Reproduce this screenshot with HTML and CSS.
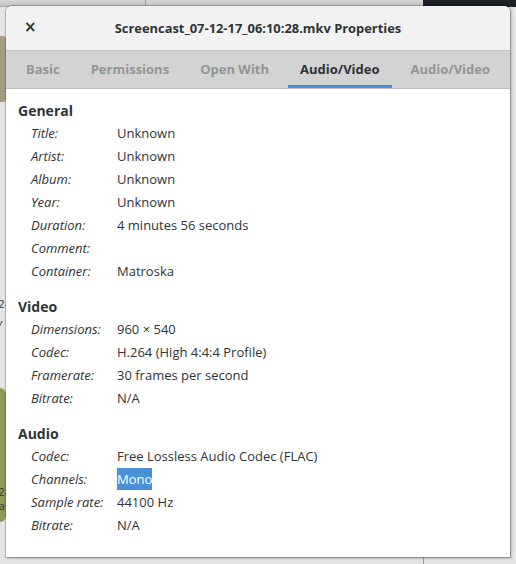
FILE: index.html
```html
<!DOCTYPE html>
<html>
<head>
<meta charset="utf-8">
<link rel="stylesheet" href="styles.css">
</head>
<body>
<div class="desktop">
  <div class="bg-top"></div>
  <div class="bg-top-line"></div>
  <div class="bg-dark"></div>
  <div class="bg-brown"></div>
  <div class="bg-green"></div>
  <div class="bg-text t1">02-</div>
  <div class="bg-text t2">v</div>
  <div class="bg-text t3">02-</div>
  <div class="bg-text t4">la</div>
  <div class="bg-vline"></div>

  <div class="window">
    <div class="header">
      <span class="close">×</span>
      <span class="title">Screencast_07-12-17_06:10:28.mkv Properties</span>
    </div>
    <div class="tabs">
      <div class="tab">Basic</div>
      <div class="tab">Permissions</div>
      <div class="tab">Open With</div>
      <div class="tab active">Audio/Video</div>
      <div class="tab">Audio/Video</div>
    </div>
    <div class="content">
      <section class="group">
        <h2>General</h2>
        <div class="rows">
          <span class="label">Title:</span><span class="value">Unknown</span>
          <span class="label">Artist:</span><span class="value">Unknown</span>
          <span class="label">Album:</span><span class="value">Unknown</span>
          <span class="label">Year:</span><span class="value">Unknown</span>
          <span class="label">Duration:</span><span class="value">4 minutes 56 seconds</span>
          <span class="label">Comment:</span><span class="value"></span>
          <span class="label">Container:</span><span class="value">Matroska</span>
        </div>
      </section>
      <section class="group">
        <h2>Video</h2>
        <div class="rows">
          <span class="label">Dimensions:</span><span class="value">960 × 540</span>
          <span class="label">Codec:</span><span class="value">H.264 (High 4:4:4 Profile)</span>
          <span class="label">Framerate:</span><span class="value">30 frames per second</span>
          <span class="label">Bitrate:</span><span class="value">N/A</span>
        </div>
      </section>
      <section class="group">
        <h2>Audio</h2>
        <div class="rows">
          <span class="label">Codec:</span><span class="value">Free Lossless Audio Codec (FLAC)</span>
          <span class="label">Channels:</span><span class="value"><span class="selected">Mono</span></span>
          <span class="label">Sample rate:</span><span class="value">44100 Hz</span>
          <span class="label">Bitrate:</span><span class="value">N/A</span>
        </div>
      </section>
    </div>
  </div>
</div>
</body>
</html>
```

FILE: styles.css
```css
html, body {
  margin: 0;
  padding: 0;
}
body {
  font-family: "Open Sans", "Noto Sans", sans-serif;
  font-size: 13px;
  color: #2e3436;
}
.desktop {
  position: relative;
  width: 516px;
  height: 564px;
  overflow: hidden;
  background: #e4e4e4;
}
.bg-top {
  position: absolute;
  left: 0;
  top: 0;
  width: 423px;
  height: 6px;
  background: linear-gradient(#d6d6d6, #c2c2c2);
  border-bottom: 1px solid #a8a8a8;
}
.bg-top-line {
  position: absolute;
  left: 145px;
  top: 0;
  width: 1px;
  height: 6px;
  background: #9a9a9a;
}
.bg-dark {
  position: absolute;
  left: 423px;
  top: 0;
  width: 93px;
  height: 7px;
  background: #1d2025;
}
.bg-vline {
  position: absolute;
  left: 423px;
  top: 540px;
  width: 1px;
  height: 24px;
  background: #9a9a9a;
}
.bg-brown {
  position: absolute;
  left: -10px;
  top: 36px;
  width: 16px;
  height: 66px;
  border-radius: 3px;
  background: #a69b86;
}
.bg-green {
  position: absolute;
  left: -14px;
  top: 388px;
  width: 20px;
  height: 134px;
  border-radius: 6px;
  background: #8d9a5c;
}
.bg-text {
  position: absolute;
  font-size: 11px;
  line-height: 12px;
  color: #333;
}
.t1 { left: -8px; top: 298px; }
.t2 { left: -3px; top: 317px; font-style: italic; }
.t3 { left: -8px; top: 486px; }
.t4 { left: -4px; top: 500px; }

.window {
  position: absolute;
  left: 6px;
  top: 6px;
  width: 504px;
  height: 551px;
  background: #ffffff;
  border-radius: 6px 6px 0 0;
  box-shadow: 0 0 0 1px rgba(0, 0, 0, 0.18), 1px 1px 3px rgba(0, 0, 0, 0.35);
  overflow: hidden;
  display: flex;
  flex-direction: column;
}
.header {
  height: 44px;
  flex: none;
  background: #f2f2f2;
  border-bottom: 1px solid #c4c4c4;
  display: flex;
  align-items: center;
  justify-content: center;
  position: relative;
}
.close {
  position: absolute;
  left: 18px;
  top: 12px;
  font-family: "DejaVu Sans", sans-serif;
  font-size: 15px;
  font-weight: bold;
  color: #2e3436;
}
.title {
  font-weight: bold;
  font-size: 12.9px;
  color: #2e3436;
}
.tabs {
  height: 38px;
  flex: none;
  background: #d3d3d3;
  border-bottom: 1px solid #bdbdbd;
  display: flex;
  padding-left: 8px;
  gap: 7px;
  box-sizing: border-box;
}
.tab {
  padding: 0 12px;
  line-height: 37px;
  height: 34px;
  font-weight: bold;
  color: #929595;
  border-bottom: 3px solid transparent;
}
.tab.active {
  color: #2e3436;
  border-bottom-color: #4a90d9;
}
.content {
  padding: 10px 12px 0 12px;
}
.group + .group {
  margin-top: 12px;
}
h2 {
  margin: 0;
  font-size: 14px;
  font-weight: bold;
  line-height: 23px;
  color: #2e3436;
}
.rows {
  display: grid;
  grid-template-columns: 86px 1fr;
  padding-left: 13px;
}
.label, .value {
  line-height: 23px;
  height: 23px;
}
.label {
  font-style: italic;
}
.selected {
  background: #4a90d9;
  color: #ffffff;
  padding: 2px 0;
}
```
